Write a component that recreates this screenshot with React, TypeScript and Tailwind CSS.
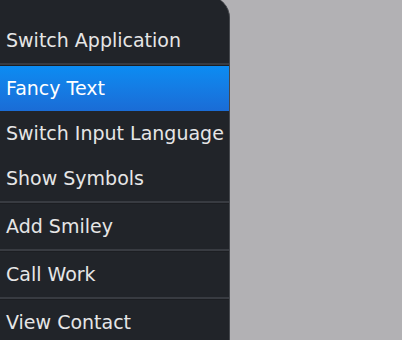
const items: { label: string; active?: boolean; sep?: boolean }[] = [
  { label: 'Switch Application', sep: true },
  { label: 'Fancy Text', active: true },
  { label: 'Switch Input Language' },
  { label: 'Show Symbols', sep: true },
  { label: 'Add Smiley', sep: true },
  { label: 'Call Work', sep: true },
  { label: 'View Contact' },
]

export default function App() {
  return (
    <div className="w-[402px] h-[340px] overflow-hidden bg-[#b2b1b4] font-['DejaVu_Sans',sans-serif]">
      <div className="w-[230px] mt-[-4px] pt-[22px] bg-[#212429] rounded-tr-[22px] border-r border-[#45484d] h-[400px]">
        {items.map((it) => (
          <div key={it.label}>
            <div
              className={`h-[45px] flex items-center pl-[6px] text-[19px] whitespace-nowrap ${
                it.active
                  ? 'bg-gradient-to-b from-[#0b8cf2] to-[#1a6cd6] text-white'
                  : 'text-[#e6e6e6]'
              }`}
            >
              {it.label}
            </div>
            {it.sep && <div className="h-[3px] bg-[#383b41] border-b border-[#1c1e22]" />}
          </div>
        ))}
      </div>
    </div>
  )
}
